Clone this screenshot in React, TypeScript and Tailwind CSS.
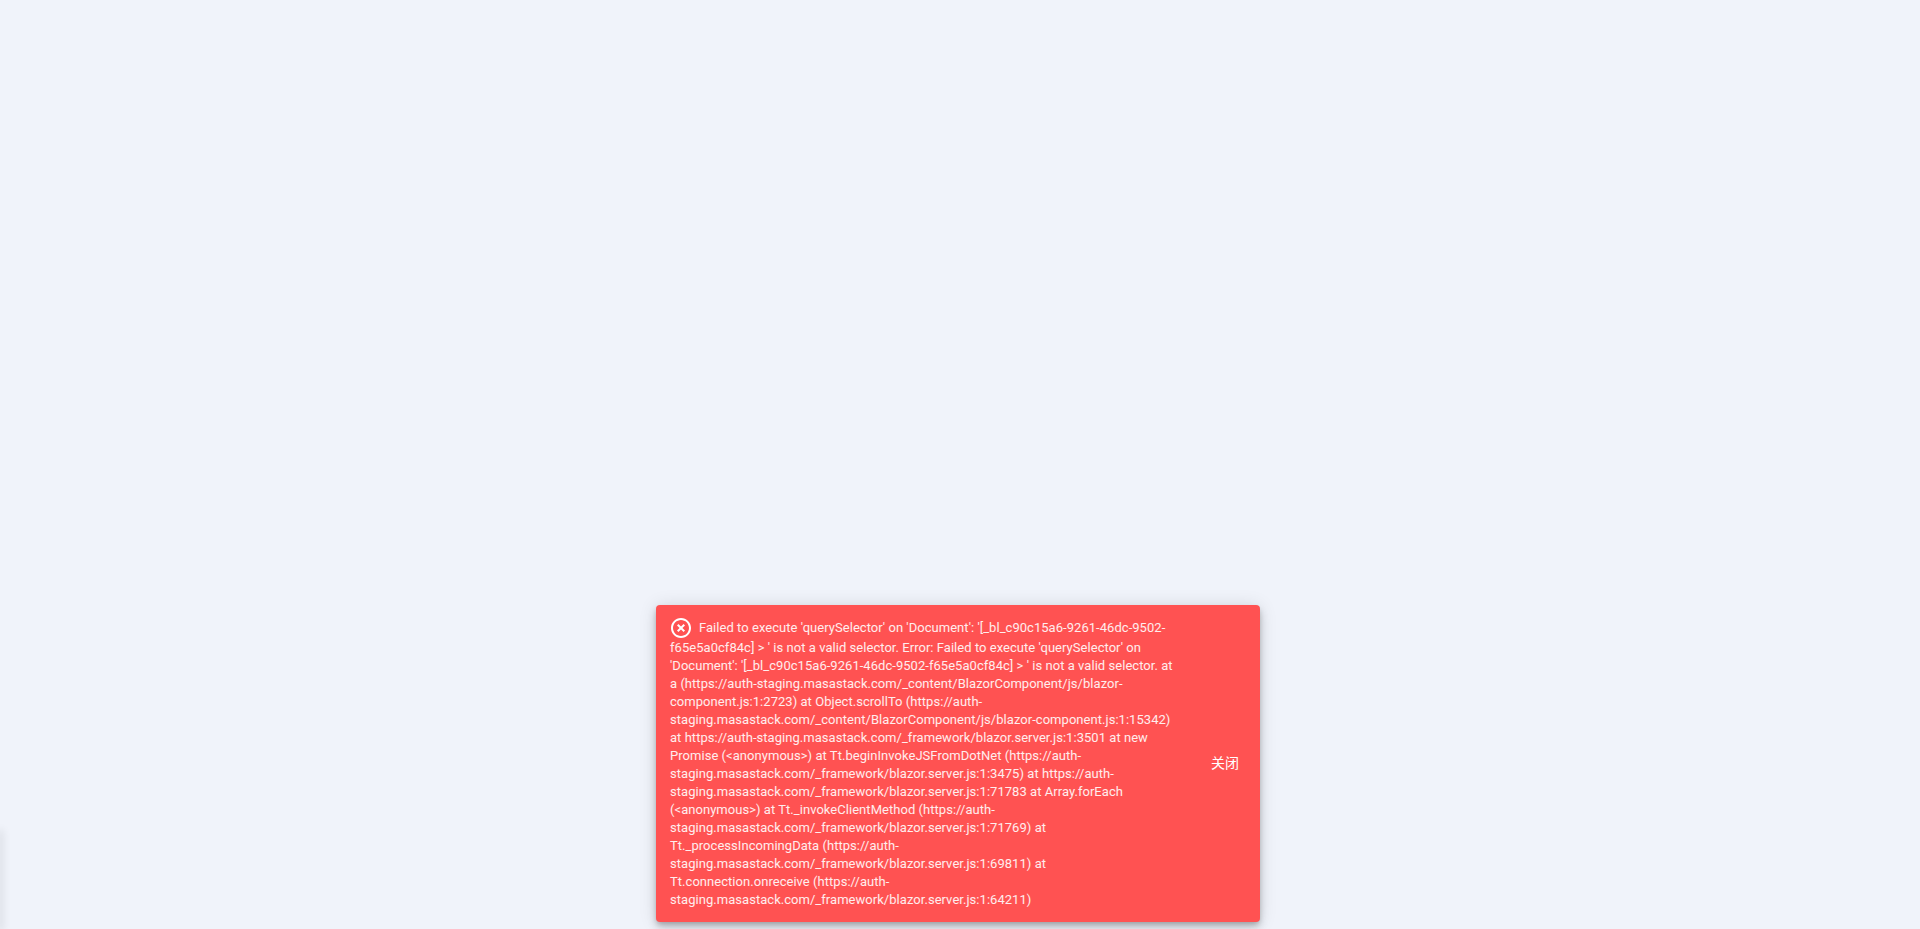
const message =
  "Failed to execute 'querySelector' on 'Document': '[_bl_c90c15a6-9261-46dc-9502-f65e5a0cf84c] > ' is not a valid selector. Error: Failed to execute 'querySelector' on 'Document': '[_bl_c90c15a6-9261-46dc-9502-f65e5a0cf84c] > ' is not a valid selector. at a (https://auth-staging.masastack.com/_content/BlazorComponent/js/blazor-component.js:1:2723) at Object.scrollTo (https://auth-staging.masastack.com/_content/BlazorComponent/js/blazor-component.js:1:15342) at https://auth-staging.masastack.com/_framework/blazor.server.js:1:3501 at new Promise (<anonymous>) at Tt.beginInvokeJSFromDotNet (https://auth-staging.masastack.com/_framework/blazor.server.js:1:3475) at https://auth-staging.masastack.com/_framework/blazor.server.js:1:71783 at Array.forEach (<anonymous>) at Tt._invokeClientMethod (https://auth-staging.masastack.com/_framework/blazor.server.js:1:71769) at Tt._processIncomingData (https://auth-staging.masastack.com/_framework/blazor.server.js:1:69811) at Tt.connection.onreceive (https://auth-staging.masastack.com/_framework/blazor.server.js:1:64211)";

export default function App() {
  return (
    <div className="relative flex h-screen flex-col items-center justify-end overflow-hidden bg-[#f0f3fa] pb-[7px] pr-[4px] font-['Roboto','Noto_Sans_CJK_SC',sans-serif]">
      <div className="absolute bottom-0 left-0 h-[97px] w-0 shadow-[0_0_8px_2px_rgba(0,0,0,0.14)]" />
      <div className="flex w-[604px] items-center rounded bg-[#ff5252] text-white shadow-[0_3px_5px_-1px_rgba(0,0,0,0.2),0_6px_10px_0_rgba(0,0,0,0.14),0_1px_18px_0_rgba(0,0,0,0.12)]">
        <div className="w-[520px] flex-none pb-[13px] pl-[14px] pt-[14px] text-[13px] leading-[18px] tracking-[0.04px] text-white/90">
          <svg viewBox="0 0 24 24" className="-my-[2px] -ml-[1px] mr-[6px] inline-block h-6 w-6 -translate-y-px fill-white align-middle">
            <path d="M14.59 8 12 10.59 9.41 8 8 9.41 10.59 12 8 14.59 9.41 16 12 13.41 14.59 16 16 14.59 13.41 12 16 9.41 14.59 8ZM12 2C6.47 2 2 6.47 2 12s4.47 10 10 10 10-4.47 10-10S17.53 2 12 2Zm0 18c-4.41 0-8-3.59-8-8s3.59-8 8-8 8 3.59 8 8-3.59 8-8 8Z" />
          </svg>
          {message}
        </div>
        <button className="ml-auto mr-[13px] h-9 flex-none px-2 text-[14px] text-white">关闭</button>
      </div>
    </div>
  );
}
